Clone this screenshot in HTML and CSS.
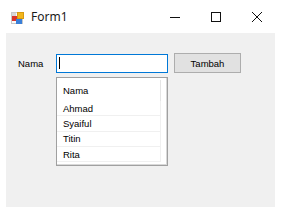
FILE: index.html
```html
<!DOCTYPE html>
<html lang="en">
<head>
  <meta charset="UTF-8">
  <title>Form1</title>
  <link rel="stylesheet" href="styles.css">
</head>
<body>
  <div class="window">
    <div class="titlebar">
      <svg class="app-icon" width="13" height="12" viewBox="0 0 13 12">
        <rect x="0.5" y="0.5" width="11" height="11" fill="#fafafa" stroke="#c8c8c8"/>
        <rect x="1" y="1" width="4" height="3" fill="#d8d8d8"/>
        <rect x="6" y="0" width="7" height="7" fill="#f2b61c"/>
        <rect x="6.5" y="0.5" width="6" height="6" fill="none" stroke="#d89a10"/>
        <rect x="1" y="4" width="5" height="5" fill="#d9342b"/>
        <rect x="5" y="7" width="6" height="5" fill="#3a7fd8"/>
      </svg>
      <span class="title">Form1</span>
      <div class="controls">
        <div class="ctl">
          <svg width="10" height="10" viewBox="0 0 10 10"><line x1="0" y1="5.5" x2="10" y2="5.5" stroke="#111" stroke-width="1"/></svg>
        </div>
        <div class="ctl">
          <svg width="10" height="10" viewBox="0 0 10 10"><rect x="0.5" y="0.5" width="9" height="9" fill="none" stroke="#111" stroke-width="1"/></svg>
        </div>
        <div class="ctl">
          <svg width="10" height="10" viewBox="0 0 10 10"><path d="M0 0 L10 10 M10 0 L0 10" stroke="#111" stroke-width="1"/></svg>
        </div>
      </div>
    </div>

    <div class="client">
      <div class="input-row">
        <span class="lbl">Nama</span>
        <div class="txt"><span class="caret"></span></div>
        <div class="btn">Tambah</div>
      </div>

      <div class="listview">
        <div class="lv-header"><span class="lv-col">Nama</span></div>
        <div class="lv-row">Ahmad</div>
        <div class="lv-row">Syaiful</div>
        <div class="lv-row">Titin</div>
        <div class="lv-row">Rita</div>
      </div>
    </div>
  </div>
</body>
</html>
```

FILE: styles.css
```css
* {
  margin: 0;
  padding: 0;
  box-sizing: border-box;
}

body {
  background: #fff;
  width: 289px;
  height: 207px;
  overflow: hidden;
  font-family: "Liberation Sans", Arial, sans-serif;
}

.window {
  width: 289px;
  height: 207px;
  display: flex;
  flex-direction: column;
}

.titlebar {
  height: 33px;
  display: flex;
  align-items: center;
}

.app-icon {
  margin-left: 11px;
  margin-top: 2px;
}

.title {
  margin-left: 7px;
  font-family: "Noto Sans", sans-serif;
  font-size: 12px;
  color: #1a1a1a;
}

.controls {
  margin-left: auto;
  margin-right: 12px;
  display: flex;
}

.ctl {
  width: 41px;
  height: 33px;
  display: flex;
  align-items: center;
  justify-content: center;
}

.client {
  margin-left: 6px;
  width: 269px;
  flex: 1;
  background: #f0f0f0;
  padding-left: 12px;
}

.input-row {
  margin-top: 20px;
  height: 20px;
  display: flex;
  align-items: center;
}

.lbl {
  width: 38px;
  font-size: 9.5px;
  color: #000;
}

.txt {
  width: 112px;
  height: 19px;
  background: #fff;
  border: 1px solid #0078d7;
  display: flex;
  align-items: center;
}

.caret {
  width: 1px;
  height: 12px;
  margin-left: 2px;
  background: #000;
}

.btn {
  margin-left: 6px;
  width: 67px;
  height: 20px;
  background: #e1e1e1;
  border: 1px solid #adadad;
  font-size: 9.5px;
  color: #000;
  display: flex;
  align-items: center;
  justify-content: center;
}

.listview {
  margin-top: 4px;
  margin-left: 38px;
  width: 112px;
  height: 89px;
  background: #fff;
  border: 1px solid #a0a0a0;
  box-shadow: inset -1px -1px 0 #d8d8d8;
  font-size: 9.5px;
  color: #000;
}

.lv-header {
  height: 23px;
  width: 104px;
  padding-top: 2px;
}

.lv-col {
  display: flex;
  align-items: center;
  height: 21px;
  padding-left: 6px;
  border-right: 1px solid #e5e5e5;
}

.lv-row {
  width: 104px;
  height: 15.33px;
  padding-left: 6px;
  display: flex;
  align-items: center;
  border-bottom: 1px solid #f0f0f0;
  border-right: 1px solid #f0f0f0;
}
```
